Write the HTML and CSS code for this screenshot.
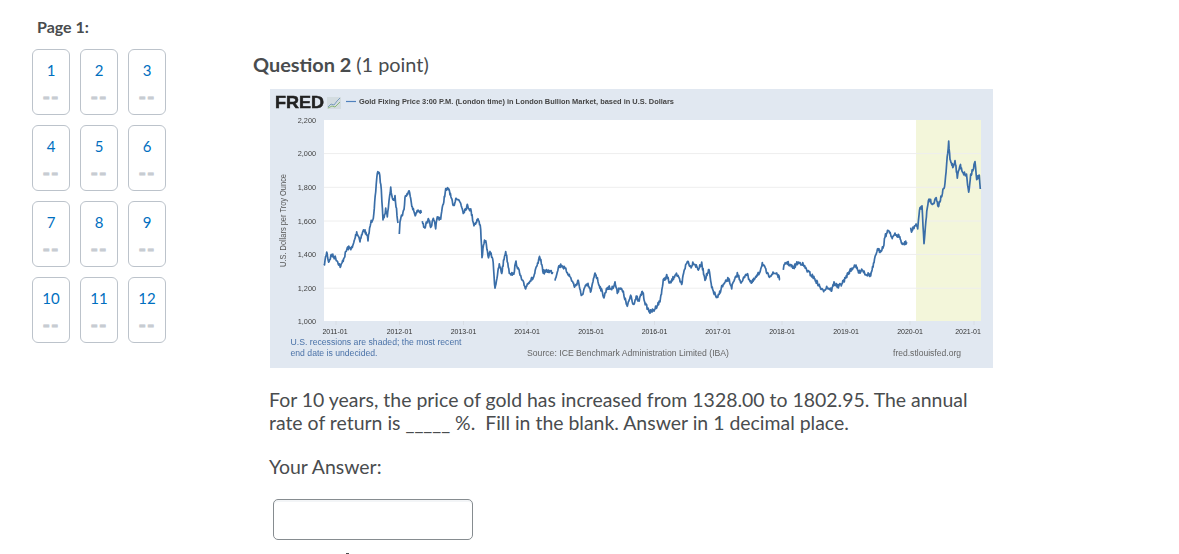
FILE: index.html
```html
<!DOCTYPE html>
<html lang="en">

<head>
    <meta charset="UTF-8">
    <meta name="viewport" content="width=device-width, initial-scale=1.0">
    <title>Quiz - Page 1</title>
    <link rel="stylesheet" href="styles.css">
</head>

<body>
    <div class="quiz-page">
        <nav class="page-nav">
            <h3 class="page-label">Page 1:</h3>
            <div class="tile-grid">
                <a class="tile"><span class="tile-num">1</span><span class="tile-dash">--</span></a>
                <a class="tile"><span class="tile-num">2</span><span class="tile-dash">--</span></a>
                <a class="tile"><span class="tile-num">3</span><span class="tile-dash">--</span></a>
                <a class="tile"><span class="tile-num">4</span><span class="tile-dash">--</span></a>
                <a class="tile"><span class="tile-num">5</span><span class="tile-dash">--</span></a>
                <a class="tile"><span class="tile-num">6</span><span class="tile-dash">--</span></a>
                <a class="tile"><span class="tile-num">7</span><span class="tile-dash">--</span></a>
                <a class="tile"><span class="tile-num">8</span><span class="tile-dash">--</span></a>
                <a class="tile"><span class="tile-num">9</span><span class="tile-dash">--</span></a>
                <a class="tile"><span class="tile-num">10</span><span class="tile-dash">--</span></a>
                <a class="tile"><span class="tile-num">11</span><span class="tile-dash">--</span></a>
                <a class="tile"><span class="tile-num">12</span><span class="tile-dash">--</span></a>
            </div>
        </nav>

        <main class="question">
            <h2 class="question-title">Question 2 <span class="question-points">(1 point)</span></h2>

            <!-- FRED chart, viewBox is in page pixels so the trace is easy to compare -->
            <svg class="fred-chart" viewBox="270 89 723 279" width="723" height="279">
                <rect class="chart-bg" x="270" y="89" width="723" height="279" />
                <rect class="plot-bg" x="324" y="120" width="657" height="201" />
                <rect class="recession" x="916" y="120" width="65" height="201" />

                <g class="grid">
                    <line x1="324" x2="981" y1="153.6" y2="153.6" />
                    <line x1="324" x2="981" y1="187.3" y2="187.3" />
                    <line x1="324" x2="981" y1="221" y2="221" />
                    <line x1="324" x2="981" y1="254.4" y2="254.4" />
                    <line x1="324" x2="981" y1="288.2" y2="288.2" />
                </g>

                <g class="ticks">
                    <line x1="336" x2="336" y1="321" y2="325" />
                    <line x1="399.5" x2="399.5" y1="321" y2="325" />
                    <line x1="463.5" x2="463.5" y1="321" y2="325" />
                    <line x1="527" x2="527" y1="321" y2="325" />
                    <line x1="591" x2="591" y1="321" y2="325" />
                    <line x1="654.5" x2="654.5" y1="321" y2="325" />
                    <line x1="718" x2="718" y1="321" y2="325" />
                    <line x1="782" x2="782" y1="321" y2="325" />
                    <line x1="846" x2="846" y1="321" y2="325" />
                    <line x1="910" x2="910" y1="321" y2="325" />
                    <line x1="974" x2="974" y1="321" y2="325" />
                </g>

                <g id="gold-line" class="gold-line"></g>

                <text class="fred-logo" x="275" y="108" textLength="49" lengthAdjust="spacingAndGlyphs">FRED</text>
                <rect class="logo-box" x="327" y="97" width="14" height="12" />
                <path class="logo-line-a" d="M328 107 L331 104 L334 105 L337 101 L340 98" />
                <path class="logo-line-b" d="M328 108 L332 106 L335 107 L338 104 L340 102" />
                <line class="legend-dash" x1="346" x2="356" y1="101.5" y2="101.5" />
                <text class="chart-title" x="359" y="104" textLength="315" lengthAdjust="spacingAndGlyphs">Gold Fixing Price 3:00 P.M. (London time) in London Bullion Market, based in U.S. Dollars</text>

                <g class="y-labels">
                    <text x="316" y="122.5">2,200</text>
                    <text x="316" y="156">2,000</text>
                    <text x="316" y="190">1,800</text>
                    <text x="316" y="223.5">1,600</text>
                    <text x="316" y="257">1,400</text>
                    <text x="316" y="291">1,200</text>
                    <text x="316" y="324">1,000</text>
                </g>
                <text class="y-title" transform="translate(286 220.5) rotate(-90)" textLength="93" lengthAdjust="spacingAndGlyphs">U.S. Dollars per Troy Ounce</text>

                <g class="x-labels">
                    <text x="335" y="333.5">2011-01</text>
                    <text x="399.5" y="333.5">2012-01</text>
                    <text x="463.5" y="333.5">2013-01</text>
                    <text x="527" y="333.5">2014-01</text>
                    <text x="591" y="333.5">2015-01</text>
                    <text x="654.5" y="333.5">2016-01</text>
                    <text x="718" y="333.5">2017-01</text>
                    <text x="782" y="333.5">2018-01</text>
                    <text x="846" y="333.5">2019-01</text>
                    <text x="910" y="333.5">2020-01</text>
                    <text x="968" y="333.5">2021-01</text>
                </g>

                <text class="note" x="290.5" y="345" textLength="171" lengthAdjust="spacingAndGlyphs">U.S. recessions are shaded; the most recent</text>
                <text class="note" x="290.5" y="356" textLength="87" lengthAdjust="spacingAndGlyphs">end date is undecided.</text>
                <text class="source" x="527" y="356" textLength="202" lengthAdjust="spacingAndGlyphs">Source: ICE Benchmark Administration Limited (IBA)</text>
                <text class="source" x="893" y="356" textLength="68" lengthAdjust="spacingAndGlyphs">fred.stlouisfed.org</text>
            </svg>

            <p class="question-text">For 10 years, the price of gold has increased from 1328.00 to 1802.95. The annual rate of return is _____ %.&nbsp; Fill in the blank. Answer in 1 decimal place.</p>
            <p class="answer-label">Your Answer:</p>
            <input class="answer-input" type="text">
            <div class="next-mark"></div>
        </main>
    </div>

    <script src="script.js"></script>
</body>

</html>
```

FILE: styles.css
```css
* {
    box-sizing: border-box;
}

html,
body {
    height: 100%;
}

body {
    margin: 0;
    overflow: hidden;
    background-color: white;
    color: #494c4e;
    font-family: Lato, "Open Sans", sans-serif;
}

.quiz-page {
    display: flex;
    align-items: flex-start;
}

/* left page navigation */
.page-nav {
    width: 253px;
    flex: none;
    padding: 18px 0 0 32px;
}

.page-label {
    margin: 0 0 14px 5px;
    font-size: 16px;
    line-height: 17px;
    font-weight: 700;
}

.tile-grid {
    display: grid;
    grid-template-columns: repeat(3, 38px);
    grid-auto-rows: 66px;
    gap: 10px;
}

.tile {
    display: flex;
    flex-direction: column;
    align-items: center;
    padding-top: 10px;
    border: 1px solid #bcc3cb;
    border-radius: 6px;
}

.tile-num {
    color: #006fbf;
    font-size: 15px;
    line-height: 20px;
}

.tile-dash {
    margin-top: 6px;
    color: #c7ccd2;
    font-size: 20px;
    font-weight: 700;
    line-height: 20px;
    letter-spacing: 1px;
    -webkit-text-stroke: 0.8px #c7ccd2;
}

/* question */
.question {
    flex: 1;
    padding-top: 51px;
}

.question-title {
    margin: 0 0 12px;
    font-size: 19.9px;
    line-height: 26px;
    font-weight: 700;
}

.question-points {
    font-weight: 400;
}

.fred-chart {
    display: block;
    margin-left: 17px;
    filter: blur(0.5px);
}

.chart-bg {
    fill: #e1e8f1;
}

.plot-bg {
    fill: white;
}

.recession {
    fill: #f3f6da;
}

.grid line {
    stroke: #eeeeee;
    stroke-width: 1;
}

.ticks line {
    stroke: #d8dde4;
    stroke-width: 1;
}

.gold-line polyline {
    fill: none;
    stroke: #3a6ea8;
    stroke-width: 1.7;
    stroke-linejoin: round;
}

.fred-chart text {
    font-family: "Liberation Sans", Arial, sans-serif;
}

.fred-chart .fred-logo {
    font-size: 17px;
    font-weight: 700;
    fill: #222;
    stroke: #222;
    stroke-width: 0.5;
}

.logo-box {
    fill: #d3dce0;
}

.logo-line-a,
.logo-line-b {
    fill: none;
    stroke-width: 1;
}

.logo-line-a {
    stroke: #7a9cc0;
}

.logo-line-b {
    stroke: #8db87a;
}

.legend-dash {
    stroke: #4f81bd;
    stroke-width: 1.2;
}

.chart-title {
    font-size: 7.5px;
    font-weight: 700;
    fill: #444;
}

.y-labels text {
    font-size: 7.3px;
    fill: #444;
    text-anchor: end;
}

.y-title {
    font-size: 8.5px;
    fill: #555;
    text-anchor: middle;
}

.x-labels text {
    font-size: 7px;
    fill: #333;
    text-anchor: middle;
}

.note {
    font-size: 8.4px;
    fill: #4a72a8;
}

.source {
    font-size: 8.4px;
    fill: #666;
}

.question-text {
    margin: 20px 0 0 16px;
    width: 720px;
    font-size: 19.45px;
    line-height: 23px;
}

.answer-label {
    margin: 21px 0 0 16px;
    font-size: 19.45px;
    line-height: 24px;
}

.answer-input {
    display: block;
    width: 200px;
    height: 41px;
    margin: 20px 0 0 20px;
    border: 1px solid #868c90;
    border-radius: 5px;
    box-shadow: inset 0 2px 0 #f3f5f7;
    outline: none;
}

.next-mark {
    width: 3px;
    height: 2px;
    margin: 13px 0 0 93px;
    background-color: #494c4e;
}
```

FILE: script.js
```js
// gold price trace, in page pixels. each array is one unbroken piece of the line
var pieces = [
    [[324,266],[326.7,252],[328.7,262],[331.3,255],[335.7,258],[340.7,267],[347.3,248],[352.3,248],[356.7,232],[360,240],[364,229],[368,239],[370.7,223],[373.3,217],[375.7,193],[377.3,173],[379.3,172],[381.3,190],[383,220],[385.7,210],[387.3,215],[390.7,189],[393.3,202],[395,197],[398,223]],
    [[399.3,232],[400,220],[404,210],[405,197],[409.7,191],[412.3,208],[415.7,215],[418,210],[421.3,213]],
    [[422.3,222],[424.7,229],[428.3,217],[430.7,227],[433.3,220],[435.7,227],[437.3,218],[440.7,218],[443.3,203],[445.7,190],[449,189],[453.3,207],[456.3,197],[460.7,203],[463.3,212],[467.3,206],[470.7,210],[474,225],[478,219],[480.7,228],[482,257],[484,242],[486.3,243],[488,257],[490,253],[492.7,258],[495,288],[499.3,265],[501.7,273],[504,259],[505.7,251],[509.3,272],[513.3,275],[516,262],[521.7,280],[525.7,288],[528.3,282],[533.3,278],[536.7,267],[540,257],[543.3,272],[548.3,271],[552.7,272]],
    [[555,280],[558.3,267],[561.7,265],[567.3,272],[570.7,278],[575,287],[578.3,280],[581.3,297],[585,287],[588,285],[591,292],[595,272],[599.3,285],[604,297],[607.3,287],[611.7,289],[615,283],[617.3,292],[620,287],[623.3,293],[627.3,307],[630.7,295],[633.3,304],[636.7,297],[638.7,302],[642.3,291],[645.7,305],[650,312],[654,310],[656.7,306],[660,301],[663.3,281],[666.7,276],[670,284],[676,273],[681.7,285],[684,270],[687.7,261],[690.7,267],[693.3,262],[698.3,269],[701.7,264],[705,279],[709,270],[711.7,288],[717.3,299],[721.7,287],[728.3,279],[731.7,287],[737.3,274],[741.7,283],[746,273],[751.7,283],[759.3,273],[762.3,263],[768.3,276],[772,274],[776.7,273],[780,280]],
    [[783.3,268],[786.7,262],[793.3,268],[797.3,263],[801.7,263],[808.3,272],[813.3,277],[822.7,291],[826.7,287],[831.7,290],[834,283],[838.3,287],[843.3,282],[848.3,273],[855,265],[859,273],[861.7,269],[866,274],[870.7,275],[874,263],[877,250],[880,251],[883.3,247],[885,236],[889,230],[891.7,237],[895,235],[899.3,236],[902.3,245],[906.7,242]],
    [[910.7,228],[911.5,232],[915,225],[917.7,227],[920,208],[922,207],[924,242],[927.3,207],[929,198],[932.7,205],[935.7,197],[938.3,206],[945,185],[946.7,163],[948.7,143],[950,160],[953.3,167],[955,160],[957.3,177],[960,165],[963.3,173],[966.5,175],[968.7,193],[970.7,175],[975,163],[976.7,178],[979.3,177],[980.3,189]]
];

var seed = 7;

function noise() {
    seed = (seed * 16807) % 2147483647;
    return seed / 2147483647 - 0.5;
}

var group = document.getElementById('gold-line');

pieces.forEach(function (piece) {
    var out = [];
    for (var i = 0; i < piece.length - 1; i++) {
        var a = piece[i];
        var b = piece[i + 1];
        var steps = Math.max(1, Math.round((b[0] - a[0]) / 0.5));
        for (var s = 0; s < steps; s++) {
            var t = s / steps;
            var x = a[0] + (b[0] - a[0]) * t;
            var y = a[1] + (b[1] - a[1]) * t + noise() * 4;
            out.push(x.toFixed(1) + ',' + y.toFixed(1));
        }
    }
    var last = piece[piece.length - 1];
    out.push(last[0] + ',' + last[1]);

    var line = document.createElementNS('http://www.w3.org/2000/svg', 'polyline');
    line.setAttribute('points', out.join(' '));
    group.appendChild(line);
});
```
